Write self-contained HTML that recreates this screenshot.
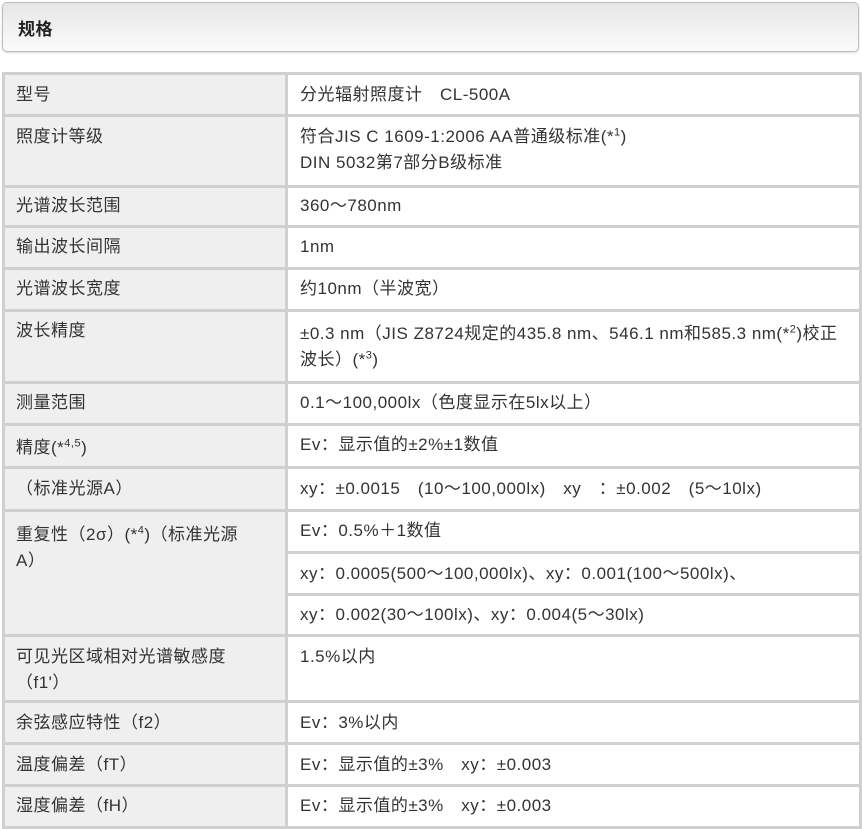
<!DOCTYPE html>
<html><head><meta charset="utf-8"><style>
body{margin:0;width:862px;height:829px;background:#fff;position:relative;overflow:hidden;font-family:"Liberation Sans","Noto Sans CJK SC",sans-serif;color:#333;font-size:17px;letter-spacing:0.5px}
.hd{position:absolute;left:2px;top:2px;width:855px;height:48px;border:1px solid #bdbdbd;border-radius:5px;background:linear-gradient(#e6e6e6,#fbfbfb);box-shadow:0 1px 2px rgba(0,0,0,.15)}
.hd b{position:absolute;left:15px;top:12px;font-size:17px;color:#222}
.lc{position:absolute;left:4px;top:73px;width:282px;height:754px;background:#efefef}
.h{position:absolute;left:2px;width:860px;height:3px;background:#d0d0d0}
.v{position:absolute;top:73px;width:3px;height:756px;background:#d0d0d0}
.t{position:absolute;line-height:26px;white-space:nowrap;margin-top:1px}
.l{left:16px}.r{left:300px}
sup{font-size:11px;line-height:0}
</style></head><body>
<div class="hd"><b>规格</b></div>
<div class="lc"></div>
<div class="v" style="left:2px"></div><div class="v" style="left:285px"></div><div class="v" style="left:859px"></div>
<div class="h" style="top:72px"></div><div class="h" style="top:114px"></div><div class="h" style="top:185px"></div><div class="h" style="top:225px"></div><div class="h" style="top:267px"></div><div class="h" style="top:309px"></div><div class="h" style="top:381px"></div><div class="h" style="top:423px"></div><div class="h" style="top:466px"></div><div class="h" style="top:509px"></div>
<div class="h" style="top:551px;left:287px;width:575px"></div><div class="h" style="top:593px;left:287px;width:575px"></div>
<div class="h" style="top:634px"></div><div class="h" style="top:700px"></div><div class="h" style="top:742px"></div><div class="h" style="top:784px"></div><div class="h" style="top:826px"></div>

<div class="t l" style="top:81px">型号</div><div class="t r" style="top:81px">分光辐射照度计　CL-500A</div>
<div class="t l" style="top:123px">照度计等级</div><div class="t r" style="top:123px">符合JIS C 1609-1:2006 AA普通级标准(*<sup>1</sup>)<br>DIN 5032第7部分B级标准</div>
<div class="t l" style="top:192px">光谱波长范围</div><div class="t r" style="top:192px">360～780nm</div>
<div class="t l" style="top:233px">输出波长间隔</div><div class="t r" style="top:233px">1nm</div>
<div class="t l" style="top:275px">光谱波长宽度</div><div class="t r" style="top:275px">约10nm（半波宽）</div>
<div class="t l" style="top:317px">波长精度</div><div class="t r" style="top:320px">±0.3 nm（JIS Z8724规定的435.8 nm、546.1 nm和585.3 nm(*<sup>2</sup>)校正<br>波长）(*<sup>3</sup>)</div>
<div class="t l" style="top:389px">测量范围</div><div class="t r" style="top:389px">0.1～100,000lx（色度显示在5lx以上）</div>
<div class="t l" style="top:434px">精度(*<sup>4,5</sup>)</div><div class="t r" style="top:431px">Ev：显示值的±2%±1数值</div>
<div class="t l" style="top:475px">（标准光源A）</div><div class="t r" style="top:475px">xy：±0.0015　(10～100,000lx)　xy　：±0.002　(5～10lx)</div>
<div class="t l" style="top:521px">重复性（2σ）(*<sup>4</sup>)（标准光源<br>A）</div><div class="t r" style="top:517px">Ev：0.5%＋1数值</div>
<div class="t r" style="top:560px">xy：0.0005(500～100,000lx)、xy：0.001(100～500lx)、</div>
<div class="t r" style="top:601px">xy：0.002(30～100lx)、xy：0.004(5～30lx)</div>
<div class="t l" style="top:643px">可见光区域相对光谱敏感度<br>（f1'）</div><div class="t r" style="top:643px">1.5%以内</div>
<div class="t l" style="top:709px">余弦感应特性（f2）</div><div class="t r" style="top:709px">Ev：3%以内</div>
<div class="t l" style="top:751px">温度偏差（fT）</div><div class="t r" style="top:751px">Ev：显示值的±3%　xy：±0.003</div>
<div class="t l" style="top:792px">湿度偏差（fH）</div><div class="t r" style="top:792px">Ev：显示值的±3%　xy：±0.003</div>
</body></html>
